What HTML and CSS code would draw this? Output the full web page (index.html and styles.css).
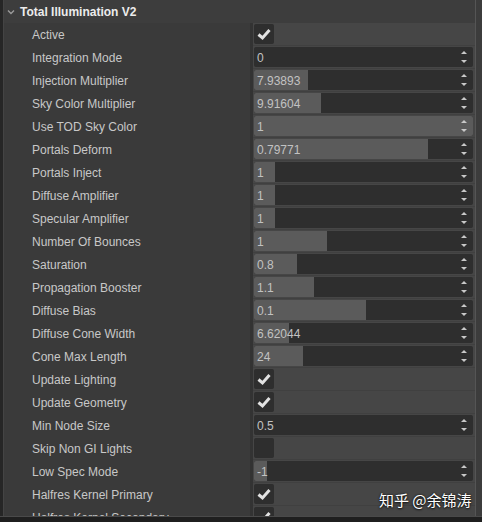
FILE: index.html
```html
<!DOCTYPE html>
<html>
<head>
<meta charset="utf-8">
<link rel="stylesheet" href="styles.css">
</head>
<body>
<div class="frame">
  <div class="edge"></div>
  <div class="list">
    <div class="header">
      <svg class="chev" width="8" height="6" viewBox="0 0 8 6"><path d="M1 1.5 L4 4.5 L7 1.5" fill="none" stroke="#9a9a9a" stroke-width="1.4"/></svg>
      <span>Total Illumination V2</span>
    </div>

    <div class="row"><div class="label">Active</div><div class="value"><div class="check on"><svg viewBox="0 0 20 20"><path d="M4.5 10.5 L8.5 14 L15.5 6" fill="none" stroke="#e2e2e2" stroke-width="3"/></svg></div></div></div>
    <div class="row"><div class="label">Integration Mode</div><div class="value"><div class="field"><div class="fill" style="width:0"></div><span class="num">0</span><div class="spin"><i class="up"></i><i class="dn"></i></div></div></div></div>
    <div class="row"><div class="label">Injection Multiplier</div><div class="value"><div class="field"><div class="fill" style="width:54px"></div><span class="num">7.93893</span><div class="spin"><i class="up"></i><i class="dn"></i></div></div></div></div>
    <div class="row"><div class="label">Sky Color Multiplier</div><div class="value"><div class="field"><div class="fill" style="width:67px"></div><span class="num">9.91604</span><div class="spin"><i class="up"></i><i class="dn"></i></div></div></div></div>
    <div class="row"><div class="label">Use TOD Sky Color</div><div class="value"><div class="field"><div class="fill" style="width:100%"></div><span class="num">1</span><div class="spin"><i class="up"></i><i class="dn"></i></div></div></div></div>
    <div class="row"><div class="label">Portals Deform</div><div class="value"><div class="field"><div class="fill" style="width:174px"></div><span class="num">0.79771</span><div class="spin"><i class="up"></i><i class="dn"></i></div></div></div></div>
    <div class="row"><div class="label">Portals Inject</div><div class="value"><div class="field"><div class="fill" style="width:21px"></div><span class="num">1</span><div class="spin"><i class="up"></i><i class="dn"></i></div></div></div></div>
    <div class="row"><div class="label">Diffuse Amplifier</div><div class="value"><div class="field"><div class="fill" style="width:21px"></div><span class="num">1</span><div class="spin"><i class="up"></i><i class="dn"></i></div></div></div></div>
    <div class="row"><div class="label">Specular Amplifier</div><div class="value"><div class="field"><div class="fill" style="width:21px"></div><span class="num">1</span><div class="spin"><i class="up"></i><i class="dn"></i></div></div></div></div>
    <div class="row"><div class="label">Number Of Bounces</div><div class="value"><div class="field"><div class="fill" style="width:73px"></div><span class="num">1</span><div class="spin"><i class="up"></i><i class="dn"></i></div></div></div></div>
    <div class="row"><div class="label">Saturation</div><div class="value"><div class="field"><div class="fill" style="width:43px"></div><span class="num">0.8</span><div class="spin"><i class="up"></i><i class="dn"></i></div></div></div></div>
    <div class="row"><div class="label">Propagation Booster</div><div class="value"><div class="field"><div class="fill" style="width:60px"></div><span class="num">1.1</span><div class="spin"><i class="up"></i><i class="dn"></i></div></div></div></div>
    <div class="row"><div class="label">Diffuse Bias</div><div class="value"><div class="field"><div class="fill" style="width:112px"></div><span class="num">0.1</span><div class="spin"><i class="up"></i><i class="dn"></i></div></div></div></div>
    <div class="row"><div class="label">Diffuse Cone Width</div><div class="value"><div class="field"><div class="fill" style="width:35px"></div><span class="num">6.62044</span><div class="spin"><i class="up"></i><i class="dn"></i></div></div></div></div>
    <div class="row"><div class="label">Cone Max Length</div><div class="value"><div class="field"><div class="fill" style="width:49px"></div><span class="num">24</span><div class="spin"><i class="up"></i><i class="dn"></i></div></div></div></div>
    <div class="row"><div class="label">Update Lighting</div><div class="value"><div class="check on"><svg viewBox="0 0 20 20"><path d="M4.5 10.5 L8.5 14 L15.5 6" fill="none" stroke="#e2e2e2" stroke-width="3"/></svg></div></div></div>
    <div class="row"><div class="label">Update Geometry</div><div class="value"><div class="check on"><svg viewBox="0 0 20 20"><path d="M4.5 10.5 L8.5 14 L15.5 6" fill="none" stroke="#e2e2e2" stroke-width="3"/></svg></div></div></div>
    <div class="row"><div class="label">Min Node Size</div><div class="value"><div class="field"><div class="fill" style="width:0"></div><span class="num">0.5</span><div class="spin"><i class="up"></i><i class="dn"></i></div></div></div></div>
    <div class="row"><div class="label">Skip Non GI Lights</div><div class="value"><div class="check"></div></div></div>
    <div class="row"><div class="label">Low Spec Mode</div><div class="value"><div class="field"><div class="fill" style="width:13px"></div><span class="num">-1</span><div class="spin"><i class="up"></i><i class="dn"></i></div></div></div></div>
    <div class="row"><div class="label">Halfres Kernel Primary</div><div class="value"><div class="check on"><svg viewBox="0 0 20 20"><path d="M4.5 10.5 L8.5 14 L15.5 6" fill="none" stroke="#e2e2e2" stroke-width="3"/></svg></div></div></div>
    <div class="row"><div class="label">Halfres Kernel Secondary</div><div class="value"><div class="check on"><svg viewBox="0 0 20 20"><path d="M4.5 10.5 L8.5 14 L15.5 6" fill="none" stroke="#e2e2e2" stroke-width="3"/></svg></div></div></div>
  </div>
  <div class="scroll"></div>
</div>
<div class="watermark">知乎 @余锦涛</div>
</body>
</html>
```

FILE: styles.css
```css
html, body {
  margin: 0;
  padding: 0;
}
body {
  width: 482px;
  height: 522px;
  overflow: hidden;
  background: #1f1f1f;
  font-family: "Liberation Sans", Arial, "Noto Sans CJK SC", sans-serif;
  font-size: 12px;
  position: relative;
}
.frame {
  display: flex;
  height: 517px;
  overflow: hidden;
  background: #3a3a3a;
  border-bottom: 1px solid #4a4a4a;
  box-sizing: border-box;
}
.edge {
  width: 3px;
  flex: none;
  background: #262626;
  border-right: 1px solid #444;
}
.list {
  flex: 1;
  display: flex;
  flex-direction: column;
  min-width: 0;
}
.header {
  flex: none;
  height: 23px;
  display: flex;
  align-items: center;
  gap: 5px;
  padding-left: 3px;
  background: #3d3d3d;
  color: #ececec;
  font-weight: bold;
  box-sizing: border-box;
}
.chev {
  flex: none;
  margin-top: 1px;
}
.row {
  flex: none;
  height: 23px;
  display: flex;
}
.label {
  width: 218px;
  flex: none;
  padding-left: 28px;
  padding-top: 1px;
  line-height: 23px;
  color: #c8c8c8;
  background: #3a3a3a;
  white-space: nowrap;
  border-right: 3px solid #333333;
}
.value {
  flex: 1;
  background: #464646;
  padding: 1px 0 2px 1px;
  box-sizing: border-box;
  border-bottom: 1px solid #404040;
  display: flex;
  align-items: flex-start;
}
.field {
  position: relative;
  width: 219px;
  height: 20px;
  background: #2e2e2e;
  border-radius: 2px;
  overflow: hidden;
  display: flex;
  align-items: center;
}
.fill {
  position: absolute;
  left: 0;
  top: 0;
  bottom: 0;
  background: #5b5b5b;
}
.num {
  position: relative;
  padding-left: 3px;
  padding-top: 1px;
  color: #c2c2c2;
  font-size: 12px;
}
.spin {
  position: absolute;
  right: 2px;
  top: 0;
  bottom: 0;
  width: 15px;
  display: flex;
  flex-direction: column;
  align-items: center;
  justify-content: center;
  gap: 6px;
}
.spin i {
  display: block;
  width: 0;
  height: 0;
  border-left: 3px solid transparent;
  border-right: 3px solid transparent;
}
.spin .up {
  border-bottom: 3px solid #c8c8c8;
}
.spin .dn {
  border-top: 3px solid #c8c8c8;
}
.check {
  width: 20px;
  height: 20px;
  background: #2e2e2e;
  border-radius: 2px;
}
.check svg {
  display: block;
  width: 20px;
  height: 20px;
}
.scroll {
  width: 6px;
  flex: none;
  background: #3c3c3c;
  border-left: 1px solid #555;
}
.watermark {
  position: absolute;
  left: 379px;
  top: 490px;
  color: #ffffff;
  font-family: "Noto Sans CJK SC", sans-serif;
  font-size: 15px;
  line-height: 20px;
  text-shadow: 0 0 2px rgba(0,0,0,0.8), 0 1px 2px rgba(0,0,0,0.7);
}
```
